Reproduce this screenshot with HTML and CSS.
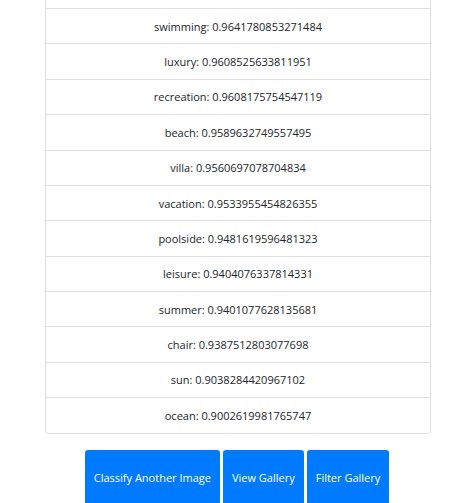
FILE: index.html
```html
<!DOCTYPE html>
<html lang="en">
<head>
    <meta charset="UTF-8">
    <meta name="viewport" content="width=device-width, initial-scale=1.0">
    <title>Classification Results</title>
    <link rel="stylesheet" href="styles.css">
</head>
<body>
    <div class="results">
        <ul class="list-group">
            <!-- bottom of the previous row, scrolled off the top -->
            <li class="list-item list-item-cut"></li>
            <li class="list-item">swimming: 0.9641780853271484</li>
            <li class="list-item">luxury: 0.9608525633811951</li>
            <li class="list-item">recreation: 0.9608175754547119</li>
            <li class="list-item">beach: 0.9589632749557495</li>
            <li class="list-item">villa: 0.9560697078704834</li>
            <li class="list-item">vacation: 0.9533955454826355</li>
            <li class="list-item">poolside: 0.9481619596481323</li>
            <li class="list-item">leisure: 0.9404076337814331</li>
            <li class="list-item">summer: 0.9401077628135681</li>
            <li class="list-item">chair: 0.9387512803077698</li>
            <li class="list-item">sun: 0.9038284420967102</li>
            <li class="list-item">ocean: 0.9002619981765747</li>
        </ul>

        <div class="actions">
            <button class="btn">Classify Another Image</button>
            <button class="btn">View Gallery</button>
            <button class="btn">Filter Gallery</button>
        </div>
    </div>
</body>
</html>
```

FILE: styles.css
```css
body {
    margin: 0;
    background-color: #fff;
    color: #212529;
    font-family: "Open Sans", "Noto Sans", sans-serif;
    font-size: 11px;
}
.list-group {
    list-style: none;
    margin: 0 43px 0 45px;
    padding: 0;
}
.list-item {
    padding: 8.7px 10px;
    line-height: 17px;
    text-align: center;
    border: 1px solid #dfdfdf;
    margin-bottom: -1px;
}
.list-item-cut {
    padding: 0;
    height: 8px;
    border-top: none;
}
.list-item:last-child {
    margin-bottom: 0;
    border-radius: 0 0 3px 3px;
}
.actions {
    display: flex;
    justify-content: center;
    gap: 3px;
    margin-top: 16px;
}
.btn {
    font-family: inherit;
    font-size: 11px;
    line-height: 17px;
    color: #fff;
    background-color: #007bff;
    border: none;
    border-radius: 3px;
    padding: 19.5px 9px;
    cursor: pointer;
}
```
